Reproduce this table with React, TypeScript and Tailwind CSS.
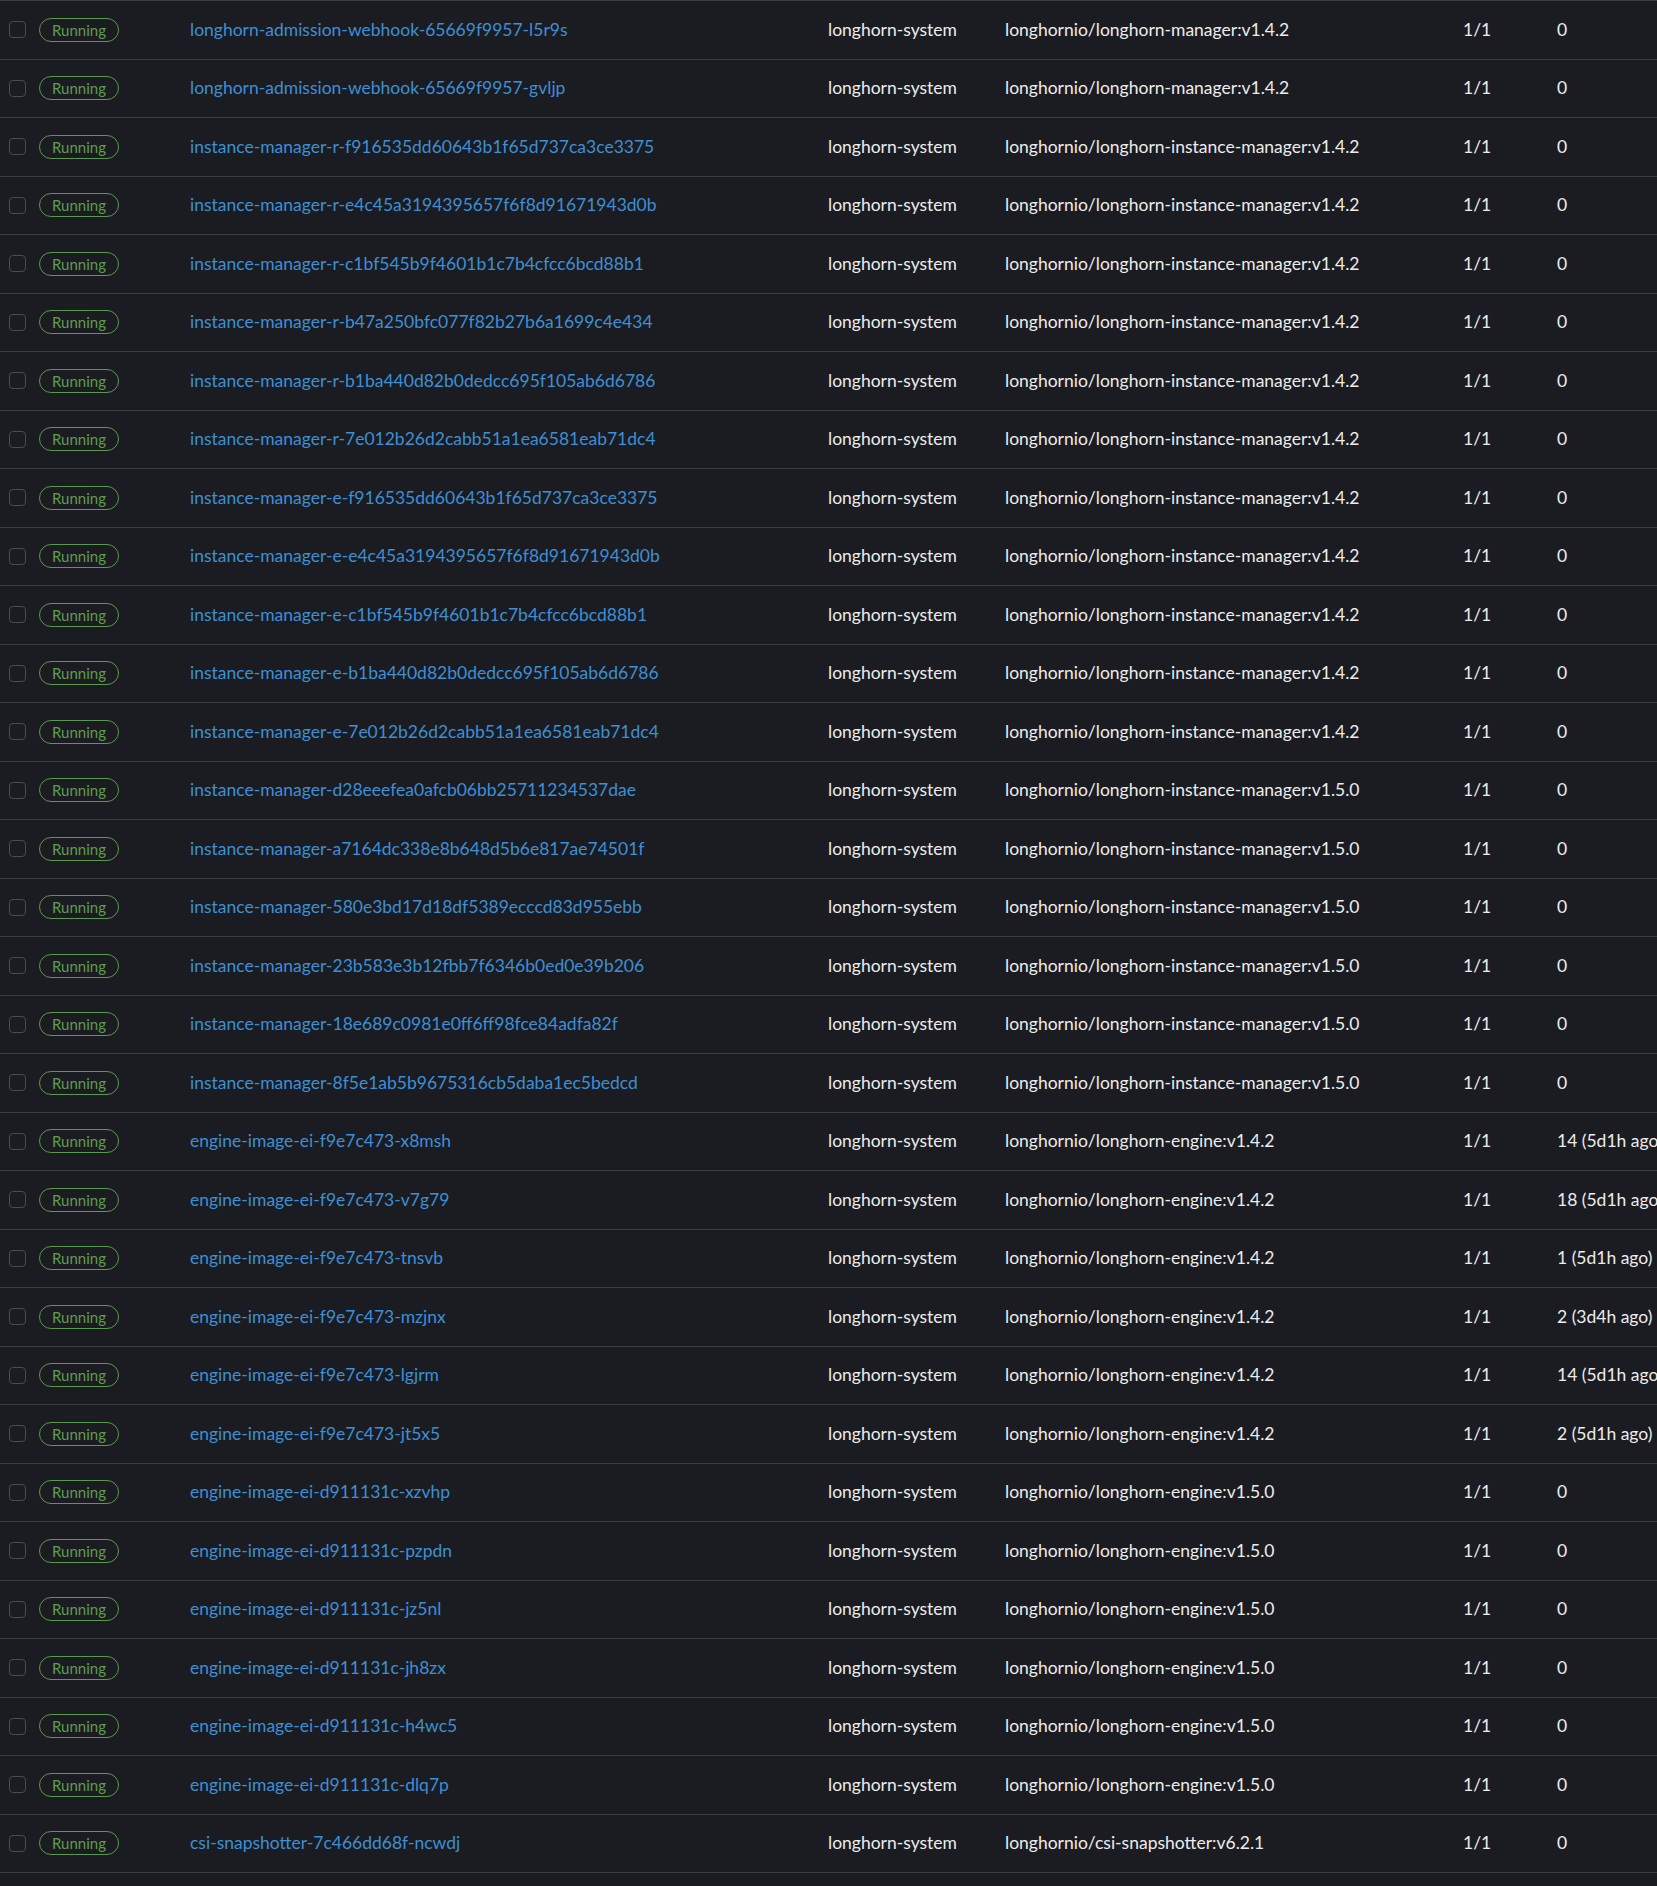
import React from "react";

type Row = { name: string; image: string; restarts: string };

const M142 = "longhornio/longhorn-manager:v1.4.2";
const IM142 = "longhornio/longhorn-instance-manager:v1.4.2";
const IM150 = "longhornio/longhorn-instance-manager:v1.5.0";
const E142 = "longhornio/longhorn-engine:v1.4.2";
const E150 = "longhornio/longhorn-engine:v1.5.0";

const rows: Row[] = [
  { name: "longhorn-admission-webhook-65669f9957-l5r9s", image: M142, restarts: "0" },
  { name: "longhorn-admission-webhook-65669f9957-gvljp", image: M142, restarts: "0" },
  { name: "instance-manager-r-f916535dd60643b1f65d737ca3ce3375", image: IM142, restarts: "0" },
  { name: "instance-manager-r-e4c45a3194395657f6f8d91671943d0b", image: IM142, restarts: "0" },
  { name: "instance-manager-r-c1bf545b9f4601b1c7b4cfcc6bcd88b1", image: IM142, restarts: "0" },
  { name: "instance-manager-r-b47a250bfc077f82b27b6a1699c4e434", image: IM142, restarts: "0" },
  { name: "instance-manager-r-b1ba440d82b0dedcc695f105ab6d6786", image: IM142, restarts: "0" },
  { name: "instance-manager-r-7e012b26d2cabb51a1ea6581eab71dc4", image: IM142, restarts: "0" },
  { name: "instance-manager-e-f916535dd60643b1f65d737ca3ce3375", image: IM142, restarts: "0" },
  { name: "instance-manager-e-e4c45a3194395657f6f8d91671943d0b", image: IM142, restarts: "0" },
  { name: "instance-manager-e-c1bf545b9f4601b1c7b4cfcc6bcd88b1", image: IM142, restarts: "0" },
  { name: "instance-manager-e-b1ba440d82b0dedcc695f105ab6d6786", image: IM142, restarts: "0" },
  { name: "instance-manager-e-7e012b26d2cabb51a1ea6581eab71dc4", image: IM142, restarts: "0" },
  { name: "instance-manager-d28eeefea0afcb06bb25711234537dae", image: IM150, restarts: "0" },
  { name: "instance-manager-a7164dc338e8b648d5b6e817ae74501f", image: IM150, restarts: "0" },
  { name: "instance-manager-580e3bd17d18df5389ecccd83d955ebb", image: IM150, restarts: "0" },
  { name: "instance-manager-23b583e3b12fbb7f6346b0ed0e39b206", image: IM150, restarts: "0" },
  { name: "instance-manager-18e689c0981e0ff6ff98fce84adfa82f", image: IM150, restarts: "0" },
  { name: "instance-manager-8f5e1ab5b9675316cb5daba1ec5bedcd", image: IM150, restarts: "0" },
  { name: "engine-image-ei-f9e7c473-x8msh", image: E142, restarts: "14 (5d1h ago)" },
  { name: "engine-image-ei-f9e7c473-v7g79", image: E142, restarts: "18 (5d1h ago)" },
  { name: "engine-image-ei-f9e7c473-tnsvb", image: E142, restarts: "1 (5d1h ago)" },
  { name: "engine-image-ei-f9e7c473-mzjnx", image: E142, restarts: "2 (3d4h ago)" },
  { name: "engine-image-ei-f9e7c473-lgjrm", image: E142, restarts: "14 (5d1h ago)" },
  { name: "engine-image-ei-f9e7c473-jt5x5", image: E142, restarts: "2 (5d1h ago)" },
  { name: "engine-image-ei-d911131c-xzvhp", image: E150, restarts: "0" },
  { name: "engine-image-ei-d911131c-pzpdn", image: E150, restarts: "0" },
  { name: "engine-image-ei-d911131c-jz5nl", image: E150, restarts: "0" },
  { name: "engine-image-ei-d911131c-jh8zx", image: E150, restarts: "0" },
  { name: "engine-image-ei-d911131c-h4wc5", image: E150, restarts: "0" },
  { name: "engine-image-ei-d911131c-dlq7p", image: E150, restarts: "0" },
  { name: "csi-snapshotter-7c466dd68f-ncwdj", image: "longhornio/csi-snapshotter:v6.2.1", restarts: "0" },
];

export default function App() {
  return (
    <div
      className="min-h-screen w-full overflow-hidden bg-[#1b1c21] text-[#ececec]"
      style={{ fontFamily: "Lato, 'Noto Sans', sans-serif" }}
    >
      <div className="border-t border-[#3d3e43]">
        {rows.map((r, i) => (
          <div
            key={i}
            className="grid h-[58.5px] grid-cols-[39px_151px_638px_177px_458px_94px_300px] items-center whitespace-nowrap border-b border-[#3d3e43] text-[17.5px]"
          >
            <div className="pl-[9px]">
              <div className="h-[17px] w-[17px] rounded-[4px] border border-[#4a4b50]" />
            </div>
            <div>
              <span className="flex h-[24px] w-[80px] items-center justify-center rounded-full border border-[#5a9a4b] text-[15px] text-[#5d9e4e]">
                Running
              </span>
            </div>
            <div className="text-[#3d8fd6]">{r.name}</div>
            <div>longhorn-system</div>
            <div>{r.image}</div>
            <div>1/1</div>
            <div>{r.restarts}</div>
          </div>
        ))}
      </div>
    </div>
  );
}
